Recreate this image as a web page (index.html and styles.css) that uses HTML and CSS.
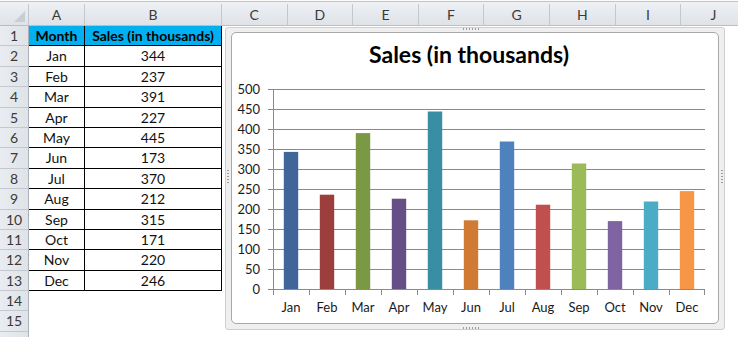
FILE: index.html
```html
<!DOCTYPE html>
<html lang="en">
<head>
    <meta charset="UTF-8">
    <title>Sales (in thousands)</title>
    <link rel="stylesheet" href="styles.css">
</head>
<body>
    <div class="topbar"></div>
    <div class="sheet">
        <div class="colheads">
            <div class="corner"></div>
            <div class="ch w-a">A</div>
            <div class="ch w-b">B</div>
            <div class="ch">C</div>
            <div class="ch">D</div>
            <div class="ch">E</div>
            <div class="ch">F</div>
            <div class="ch">G</div>
            <div class="ch">H</div>
            <div class="ch">I</div>
            <div class="ch">J</div>
        </div>
        <div class="row"><div class="rh">1</div><div class="cell w-a head">Month</div><div class="cell w-b head">Sales (in thousands)</div></div>
        <div class="row"><div class="rh">2</div><div class="cell w-a">Jan</div><div class="cell w-b">344</div></div>
        <div class="row"><div class="rh">3</div><div class="cell w-a">Feb</div><div class="cell w-b">237</div></div>
        <div class="row"><div class="rh">4</div><div class="cell w-a">Mar</div><div class="cell w-b">391</div></div>
        <div class="row"><div class="rh">5</div><div class="cell w-a">Apr</div><div class="cell w-b">227</div></div>
        <div class="row"><div class="rh">6</div><div class="cell w-a">May</div><div class="cell w-b">445</div></div>
        <div class="row"><div class="rh">7</div><div class="cell w-a">Jun</div><div class="cell w-b">173</div></div>
        <div class="row"><div class="rh">8</div><div class="cell w-a">Jul</div><div class="cell w-b">370</div></div>
        <div class="row"><div class="rh">9</div><div class="cell w-a">Aug</div><div class="cell w-b">212</div></div>
        <div class="row"><div class="rh">10</div><div class="cell w-a">Sep</div><div class="cell w-b">315</div></div>
        <div class="row"><div class="rh">11</div><div class="cell w-a">Oct</div><div class="cell w-b">171</div></div>
        <div class="row"><div class="rh">12</div><div class="cell w-a">Nov</div><div class="cell w-b">220</div></div>
        <div class="row"><div class="rh">13</div><div class="cell w-a">Dec</div><div class="cell w-b">246</div></div>
        <div class="row"><div class="rh">14</div></div>
        <div class="row"><div class="rh">15</div></div>
        <div class="row"><div class="rh">16</div></div>

        <div class="chart">
            <span class="grip grip-top"></span>
            <span class="grip grip-bottom"></span>
            <span class="grip grip-left"></span>
            <span class="grip grip-right"></span>
            <div class="chart-area">
                <svg class="plot" width="486" height="290" viewBox="0 0 486 290">
                    <text class="title" x="237" y="30" text-anchor="middle">Sales (in thousands)</text>

                    <!-- gridlines, 500 down to 50 -->
                    <g class="grid">
                        <line x1="36" y1="56.5" x2="473" y2="56.5"/>
                        <line x1="36" y1="76.5" x2="473" y2="76.5"/>
                        <line x1="36" y1="96.5" x2="473" y2="96.5"/>
                        <line x1="36" y1="116.5" x2="473" y2="116.5"/>
                        <line x1="36" y1="136.5" x2="473" y2="136.5"/>
                        <line x1="36" y1="156.5" x2="473" y2="156.5"/>
                        <line x1="36" y1="176.5" x2="473" y2="176.5"/>
                        <line x1="36" y1="196.5" x2="473" y2="196.5"/>
                        <line x1="36" y1="216.5" x2="473" y2="216.5"/>
                        <line x1="36" y1="236.5" x2="473" y2="236.5"/>
                    </g>

                    <g class="ylabels" text-anchor="end">
                        <text x="28" y="61">500</text>
                        <text x="28" y="81">450</text>
                        <text x="28" y="101">400</text>
                        <text x="28" y="121">350</text>
                        <text x="28" y="141">300</text>
                        <text x="28" y="161">250</text>
                        <text x="28" y="181">200</text>
                        <text x="28" y="201">150</text>
                        <text x="28" y="221">100</text>
                        <text x="28" y="241">50</text>
                        <text x="28" y="261">0</text>
                    </g>

                    <g class="bars">
                        <rect x="51.8" y="118.9" width="14.4" height="137.6" fill="#3f6599"/>
                        <rect x="87.8" y="161.7" width="14.4" height="94.8" fill="#9c3f3c"/>
                        <rect x="123.8" y="100.1" width="14.4" height="156.4" fill="#7b9844"/>
                        <rect x="159.8" y="165.7" width="14.4" height="90.8" fill="#664f86"/>
                        <rect x="195.8" y="78.5" width="14.4" height="178" fill="#388ea2"/>
                        <rect x="231.8" y="187.3" width="14.4" height="69.2" fill="#d07a34"/>
                        <rect x="267.8" y="108.5" width="14.4" height="148" fill="#4f81bd"/>
                        <rect x="303.8" y="171.7" width="14.4" height="84.8" fill="#c0504d"/>
                        <rect x="339.8" y="130.5" width="14.4" height="126" fill="#9bbb59"/>
                        <rect x="375.8" y="188.1" width="14.4" height="68.4" fill="#8064a2"/>
                        <rect x="411.8" y="168.5" width="14.4" height="88" fill="#4bacc6"/>
                        <rect x="447.8" y="158.1" width="14.4" height="98.4" fill="#f79646"/>
                    </g>

                    <g class="axis">
                        <line x1="41.5" y1="56" x2="41.5" y2="257"/>
                        <line x1="36" y1="256.5" x2="473" y2="256.5"/>
                        <line x1="41.5" y1="256" x2="41.5" y2="262"/>
                        <line x1="77.5" y1="256" x2="77.5" y2="262"/>
                        <line x1="113.5" y1="256" x2="113.5" y2="262"/>
                        <line x1="149.5" y1="256" x2="149.5" y2="262"/>
                        <line x1="185.5" y1="256" x2="185.5" y2="262"/>
                        <line x1="221.5" y1="256" x2="221.5" y2="262"/>
                        <line x1="257.5" y1="256" x2="257.5" y2="262"/>
                        <line x1="293.5" y1="256" x2="293.5" y2="262"/>
                        <line x1="329.5" y1="256" x2="329.5" y2="262"/>
                        <line x1="365.5" y1="256" x2="365.5" y2="262"/>
                        <line x1="401.5" y1="256" x2="401.5" y2="262"/>
                        <line x1="437.5" y1="256" x2="437.5" y2="262"/>
                        <line x1="472.5" y1="256" x2="472.5" y2="262"/>
                    </g>

                    <g class="xlabels" text-anchor="middle">
                        <text x="59" y="279">Jan</text>
                        <text x="95" y="279">Feb</text>
                        <text x="131" y="279">Mar</text>
                        <text x="167" y="279">Apr</text>
                        <text x="203" y="279">May</text>
                        <text x="239" y="279">Jun</text>
                        <text x="275" y="279">Jul</text>
                        <text x="311" y="279">Aug</text>
                        <text x="347" y="279">Sep</text>
                        <text x="383" y="279">Oct</text>
                        <text x="419" y="279">Nov</text>
                        <text x="455" y="279">Dec</text>
                    </g>
                </svg>
            </div>
        </div>
    </div>
</body>
</html>
```

FILE: styles.css
```css
body {
    margin: 0;
    font-family: Lato, "Liberation Sans", sans-serif;
    background: #fff;
    overflow: hidden;
}
.topbar {
    height: 4px;
    background: linear-gradient(#fbfbfb 0 1px, #c3c7cc 1px 2px, #eef0f3 2px);
}
.sheet {
    position: relative;
    width: 760px;
}
.colheads {
    display: flex;
    height: 22px;
    background: linear-gradient(#eceff3, #dfe3e8);
    border-bottom: 1px solid #b9bfc7;
    box-sizing: border-box;
}
.corner {
    position: relative;
    width: 29px;
    flex: none;
    border-right: 1px solid #c3c8cf;
    box-sizing: border-box;
}
.corner::after {
    content: "";
    position: absolute;
    right: 3px;
    bottom: 3px;
    width: 11px;
    height: 11px;
    background: #c9ced5;
    clip-path: polygon(100% 0, 100% 100%, 0 100%);
}
.ch {
    width: 65.6px;
    flex: none;
    border-right: 1px solid #c3c8cf;
    box-sizing: border-box;
    text-align: center;
    line-height: 21px;
    font-size: 14px;
    color: #3a3a3a;
}
.w-a {
    width: 56px;
}
.w-b {
    width: 137px;
}
.row {
    display: flex;
    height: 20.4px;
}
.rh {
    width: 29px;
    flex: none;
    background: linear-gradient(90deg, #e9ecf0, #dfe3e8);
    border-right: 1px solid #a9b0b9;
    border-bottom: 1px solid #c3c8cf;
    box-sizing: border-box;
    text-align: center;
    font-size: 14px;
    line-height: 20px;
    color: #3a3a3a;
}
.cell {
    flex: none;
    border-right: 1px solid #000;
    border-bottom: 1px solid #000;
    box-sizing: border-box;
    text-align: center;
    font-size: 14px;
    line-height: 20px;
    color: #111;
    white-space: nowrap;
}
.head {
    background: #00b0f0;
    font-weight: bold;
    color: #000;
}
.chart {
    position: absolute;
    left: 225px;
    top: 23px;
    width: 500px;
    height: 303px;
    padding: 4px 5px 5px 5px;
    box-sizing: border-box;
    border: 1px solid #cfcfcf;
    border-radius: 3px;
    background: #efefef;
}
.chart-area {
    height: 100%;
    background: #fff;
    border: 1px solid #a8a8a8;
    border-radius: 5px;
    box-sizing: border-box;
    overflow: hidden;
}
.plot {
    display: block;
}
.title {
    font-size: 23px;
    font-weight: bold;
    fill: #000;
}
.grid line {
    stroke: #8a8a8a;
    stroke-width: 1;
}
.axis line {
    stroke: #8a8a8a;
    stroke-width: 1;
}
.ylabels text,
.xlabels text {
    font-size: 13px;
    fill: #1a1a1a;
}
.grip {
    position: absolute;
    background: repeating-linear-gradient(90deg, #9a9a9a 0 1px, transparent 1px 3px);
}
.grip-top {
    top: 0;
    left: 237px;
    width: 18px;
    height: 2px;
}
.grip-bottom {
    bottom: 0;
    left: 237px;
    width: 18px;
    height: 2px;
}
.grip-left,
.grip-right {
    top: 142px;
    width: 2px;
    height: 14px;
    background: repeating-linear-gradient(#9a9a9a 0 1px, transparent 1px 3px);
}
.grip-left {
    left: 1px;
}
.grip-right {
    right: 1px;
}
```
